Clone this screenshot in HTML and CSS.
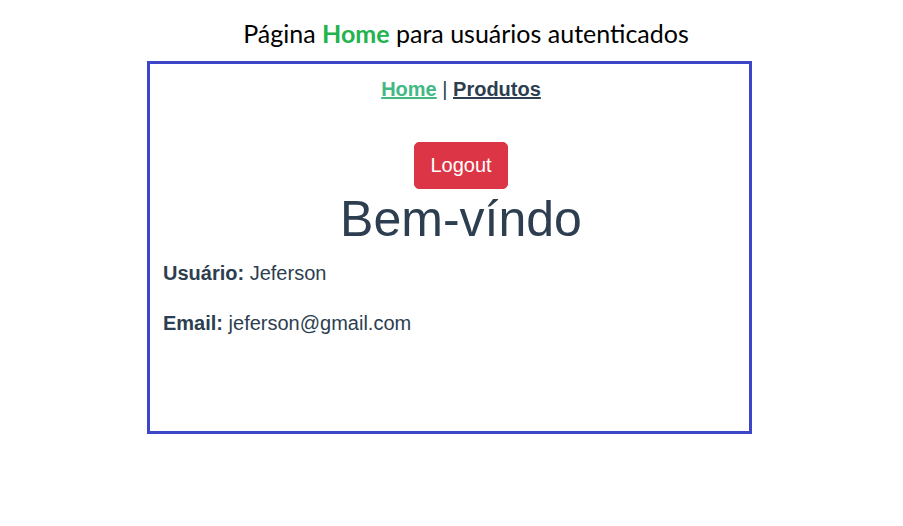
FILE: index.html
```html
<!DOCTYPE html>
<html lang="pt-BR">
<head>
<meta charset="utf-8">
<title>Home</title>
<link rel="stylesheet" href="styles.css">
</head>
<body>
  <div class="page-title">Página <strong class="hl">Home</strong> para usuários autenticados</div>
  <div class="box">
    <div class="content">
      <nav class="nav">
        <a class="nav-link active" href="#">Home</a> | <a class="nav-link" href="#">Produtos</a>
      </nav>
      <div class="actions">
        <button class="btn-logout" type="button">Logout</button>
      </div>
      <h1 class="welcome">Bem-víndo</h1>
      <p class="info"><strong>Usuário:</strong> Jeferson</p>
      <p class="info"><strong>Email:</strong> jeferson@gmail.com</p>
    </div>
  </div>
</body>
</html>
```

FILE: styles.css
```css
html, body {
  margin: 0;
  padding: 0;
  background: #ffffff;
}

body {
  font-family: "Liberation Sans", Arial, sans-serif;
  color: #2c3e50;
}

.page-title {
  font-family: Lato, "Open Sans", sans-serif;
  font-size: 25px;
  line-height: 30px;
  color: #000000;
  text-align: center;
  padding: 18px 0 0 29px;
  margin-bottom: 13px;
}

.page-title .hl {
  color: #22b34c;
  font-weight: bold;
}

.box {
  box-sizing: border-box;
  width: 605px;
  height: 373px;
  margin-left: 147px;
  border: 3px solid #3d45c8;
  padding-left: 13px;
}

.content {
  width: 596px;
  text-align: center;
}

.nav {
  font-size: 20px;
  line-height: 23px;
  padding-top: 14px;
}

.nav-link {
  font-weight: bold;
  color: #2c3e50;
  text-decoration: underline;
}

.nav-link.active {
  color: #42b983;
}

.actions {
  margin-top: 41px;
}

.btn-logout {
  font-family: "Liberation Sans", Arial, sans-serif;
  font-size: 20px;
  line-height: 29px;
  padding: 8px 15px;
  color: #ffffff;
  background: #dc3545;
  border: 1px solid #dc3545;
  border-radius: 5px;
  cursor: pointer;
  vertical-align: top;
}

.welcome {
  font-size: 50px;
  font-weight: normal;
  line-height: 1.2;
  margin: 0 0 9px;
}

.info {
  text-align: left;
  font-size: 20px;
  line-height: 30px;
  margin: 0 0 20px;
}

.info strong {
  font-weight: bold;
}
```
